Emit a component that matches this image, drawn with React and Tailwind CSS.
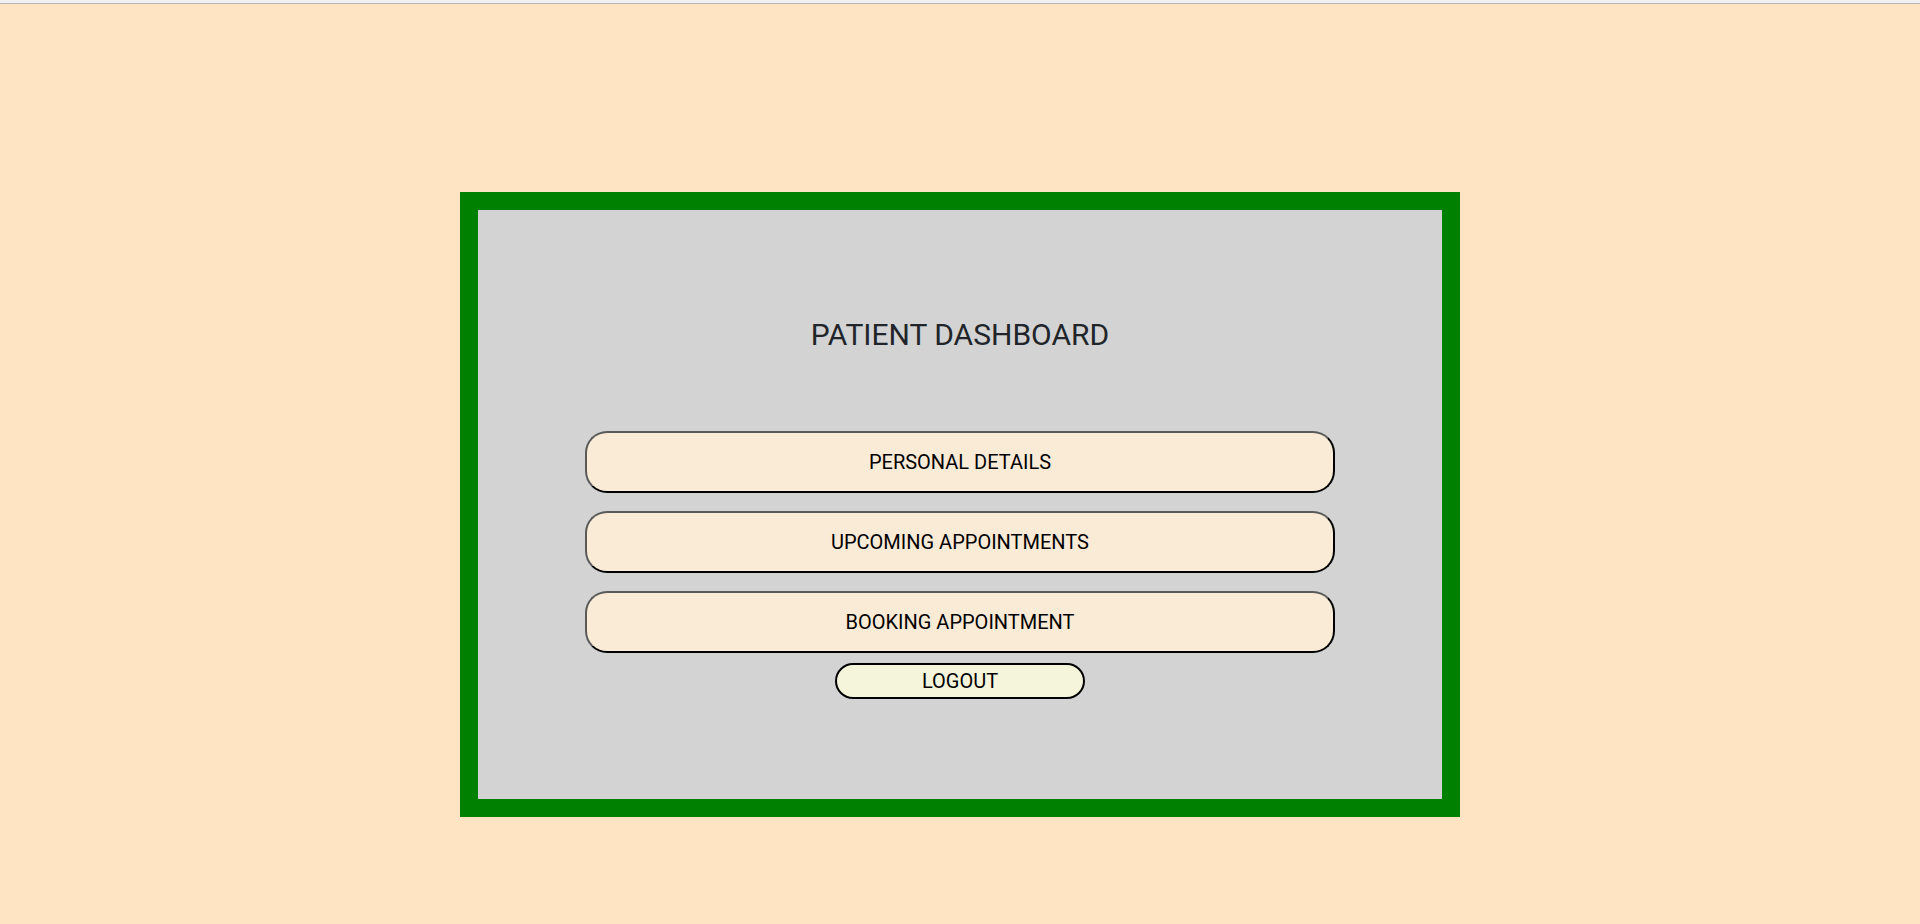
import React from "react";

export default function App() {
  const btn =
    "w-[750px] h-[62px] rounded-[22px] border-2 border-t-[#5a5a5a] border-l-[#5a5a5a] border-r-black border-b-black bg-[#faebd7] text-black text-[20px] leading-[23px] flex items-center justify-center";
  return (
    <div className="min-h-[924px] bg-[#ffe4c4] font-['Roboto',sans-serif] flex flex-col">
      <div className="h-[4px] bg-[#f1f1f1] border-b border-[#b8b8b8]" />
      <div className="flex justify-center pt-[188px]">
        <div className="w-[1000px] h-[625px] border-[18px] border-[#008000] bg-[#d3d3d3] flex flex-col items-center pt-[107px]">
          <h1 className="text-[30px] leading-[35px] text-[#212529] font-normal">PATIENT DASHBOARD</h1>
          <div className="mt-[79px] flex flex-col items-center gap-[18px]">
            <button className={btn}>PERSONAL DETAILS</button>
            <button className={btn}>UPCOMING APPOINTMENTS</button>
            <button className={btn}>BOOKING APPOINTMENT</button>
          </div>
          <button className="mt-[10px] w-[250px] h-[36px] rounded-full border-2 border-black bg-[#f5f5dc] text-black text-[20px] leading-[23px] flex items-center justify-center">
            LOGOUT
          </button>
        </div>
      </div>
    </div>
  );
}
